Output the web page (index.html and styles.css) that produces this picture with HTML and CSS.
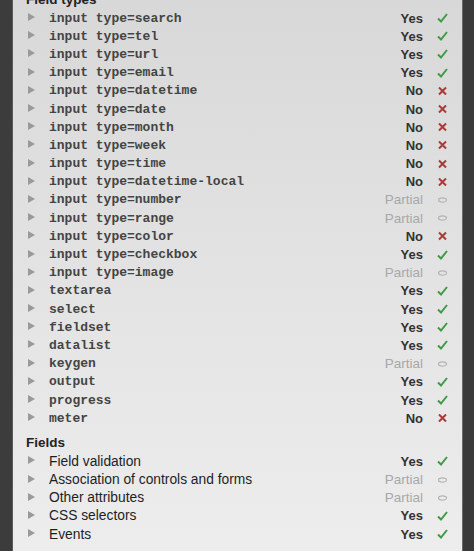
FILE: index.html
```html
<!DOCTYPE html>
<html>
<head>
<meta charset="utf-8">
<link rel="stylesheet" href="styles.css">
</head>
<body>
<svg width="0" height="0" class="defs">
  <defs>
    <symbol id="arrow" viewBox="0 0 7 8"><polygon points="0,0 7,4 0,8" fill="#9a9a9a"/></symbol>
    <symbol id="yes" viewBox="0 0 11 10"><path d="M1 5.5 L4 8.5 L10 1" fill="none" stroke="#3d9a45" stroke-width="2"/></symbol>
    <symbol id="no" viewBox="0 0 10 10"><path d="M1.5 1.5 L8.5 8.5 M8.5 1.5 L1.5 8.5" fill="none" stroke="#a83a3a" stroke-width="2"/></symbol>
    <symbol id="partial" viewBox="0 0 10 6"><ellipse cx="5" cy="3" rx="4" ry="2.2" fill="none" stroke="#b5b5b5" stroke-width="1.2"/></symbol>
  </defs>
</svg>
<div class="frame">
  <div class="side-left"></div>
  <main class="panel">
    <h2 class="heading first">Field types</h2>
    <ul class="list mono">
      <li class="row"><svg class="arrow"><use href="#arrow"/></svg><span class="name">input type=search</span><span class="status">Yes</span><svg class="icon"><use href="#yes"/></svg></li>
      <li class="row"><svg class="arrow"><use href="#arrow"/></svg><span class="name">input type=tel</span><span class="status">Yes</span><svg class="icon"><use href="#yes"/></svg></li>
      <li class="row"><svg class="arrow"><use href="#arrow"/></svg><span class="name">input type=url</span><span class="status">Yes</span><svg class="icon"><use href="#yes"/></svg></li>
      <li class="row"><svg class="arrow"><use href="#arrow"/></svg><span class="name">input type=email</span><span class="status">Yes</span><svg class="icon"><use href="#yes"/></svg></li>
      <li class="row"><svg class="arrow"><use href="#arrow"/></svg><span class="name">input type=datetime</span><span class="status">No</span><svg class="icon"><use href="#no"/></svg></li>
      <li class="row"><svg class="arrow"><use href="#arrow"/></svg><span class="name">input type=date</span><span class="status">No</span><svg class="icon"><use href="#no"/></svg></li>
      <li class="row"><svg class="arrow"><use href="#arrow"/></svg><span class="name">input type=month</span><span class="status">No</span><svg class="icon"><use href="#no"/></svg></li>
      <li class="row"><svg class="arrow"><use href="#arrow"/></svg><span class="name">input type=week</span><span class="status">No</span><svg class="icon"><use href="#no"/></svg></li>
      <li class="row"><svg class="arrow"><use href="#arrow"/></svg><span class="name">input type=time</span><span class="status">No</span><svg class="icon"><use href="#no"/></svg></li>
      <li class="row"><svg class="arrow"><use href="#arrow"/></svg><span class="name">input type=datetime-local</span><span class="status">No</span><svg class="icon"><use href="#no"/></svg></li>
      <li class="row"><svg class="arrow"><use href="#arrow"/></svg><span class="name">input type=number</span><span class="status partial">Partial</span><svg class="icon small"><use href="#partial"/></svg></li>
      <li class="row"><svg class="arrow"><use href="#arrow"/></svg><span class="name">input type=range</span><span class="status partial">Partial</span><svg class="icon small"><use href="#partial"/></svg></li>
      <li class="row"><svg class="arrow"><use href="#arrow"/></svg><span class="name">input type=color</span><span class="status">No</span><svg class="icon"><use href="#no"/></svg></li>
      <li class="row"><svg class="arrow"><use href="#arrow"/></svg><span class="name">input type=checkbox</span><span class="status">Yes</span><svg class="icon"><use href="#yes"/></svg></li>
      <li class="row"><svg class="arrow"><use href="#arrow"/></svg><span class="name">input type=image</span><span class="status partial">Partial</span><svg class="icon small"><use href="#partial"/></svg></li>
      <li class="row"><svg class="arrow"><use href="#arrow"/></svg><span class="name">textarea</span><span class="status">Yes</span><svg class="icon"><use href="#yes"/></svg></li>
      <li class="row"><svg class="arrow"><use href="#arrow"/></svg><span class="name">select</span><span class="status">Yes</span><svg class="icon"><use href="#yes"/></svg></li>
      <li class="row"><svg class="arrow"><use href="#arrow"/></svg><span class="name">fieldset</span><span class="status">Yes</span><svg class="icon"><use href="#yes"/></svg></li>
      <li class="row"><svg class="arrow"><use href="#arrow"/></svg><span class="name">datalist</span><span class="status">Yes</span><svg class="icon"><use href="#yes"/></svg></li>
      <li class="row"><svg class="arrow"><use href="#arrow"/></svg><span class="name">keygen</span><span class="status partial">Partial</span><svg class="icon small"><use href="#partial"/></svg></li>
      <li class="row"><svg class="arrow"><use href="#arrow"/></svg><span class="name">output</span><span class="status">Yes</span><svg class="icon"><use href="#yes"/></svg></li>
      <li class="row"><svg class="arrow"><use href="#arrow"/></svg><span class="name">progress</span><span class="status">Yes</span><svg class="icon"><use href="#yes"/></svg></li>
      <li class="row"><svg class="arrow"><use href="#arrow"/></svg><span class="name">meter</span><span class="status">No</span><svg class="icon"><use href="#no"/></svg></li>
    </ul>
    <h2 class="heading">Fields</h2>
    <ul class="list sans">
      <li class="row"><svg class="arrow"><use href="#arrow"/></svg><span class="name">Field validation</span><span class="status">Yes</span><svg class="icon"><use href="#yes"/></svg></li>
      <li class="row"><svg class="arrow"><use href="#arrow"/></svg><span class="name">Association of controls and forms</span><span class="status partial">Partial</span><svg class="icon small"><use href="#partial"/></svg></li>
      <li class="row"><svg class="arrow"><use href="#arrow"/></svg><span class="name">Other attributes</span><span class="status partial">Partial</span><svg class="icon small"><use href="#partial"/></svg></li>
      <li class="row"><svg class="arrow"><use href="#arrow"/></svg><span class="name">CSS selectors</span><span class="status">Yes</span><svg class="icon"><use href="#yes"/></svg></li>
      <li class="row"><svg class="arrow"><use href="#arrow"/></svg><span class="name">Events</span><span class="status">Yes</span><svg class="icon"><use href="#yes"/></svg></li>
    </ul>
  </main>
  <div class="side-right"></div>
</div>
</body>
</html>
```
FILE: styles.css
```css
html, body {
  margin: 0;
  padding: 0;
  height: 100%;
  overflow: hidden;
  background: #3a3a3a;
}
.defs {
  position: absolute;
  width: 0;
  height: 0;
}
.frame {
  display: flex;
  height: 551px;
}
.side-left {
  width: 12px;
  background: #3c3c3c;
  border-right: 1px solid #5a5a5a;
}
.side-right {
  width: 11px;
  background: #3a3a3a;
  border-left: 1px solid #6a6a6a;
}
.panel {
  flex: 1;
  background: linear-gradient(#d8d8d8, #e4e4e4 55%, #ededed);
  font-family: "Liberation Sans", Arial, sans-serif;
  color: #2a2a2a;
  overflow: hidden;
}
.heading {
  margin: 0;
  padding-left: 13px;
  font-size: 13.5px;
  font-weight: bold;
  line-height: 18px;
  color: #222;
}
.heading.first {
  margin-top: -9px;
}
.list {
  list-style: none;
  margin: 0 0 7px;
  padding: 0;
}
.row {
  display: flex;
  align-items: center;
  height: 18.2px;
  padding-left: 15px;
}
.arrow {
  width: 7px;
  height: 8px;
  flex: none;
  margin-right: 14px;
  position: relative;
  top: -1px;
}
.name {
  flex: 1;
  white-space: nowrap;
}
.mono .name {
  font-family: "Liberation Mono", "Courier New", monospace;
  font-size: 13px;
  font-weight: bold;
  color: #444;
}
.sans .name {
  font-size: 13.8px;
  color: #1e1e1e;
}
.status {
  font-size: 13px;
  font-weight: bold;
  color: #333;
  text-align: right;
}
.status.partial {
  font-weight: normal;
  font-size: 13.5px;
  color: #a8a8a8;
}
.icon {
  width: 11px;
  height: 10px;
  flex: none;
  margin-left: 14px;
  margin-right: 14px;
}
.icon.small {
  height: 6px;
}
```
